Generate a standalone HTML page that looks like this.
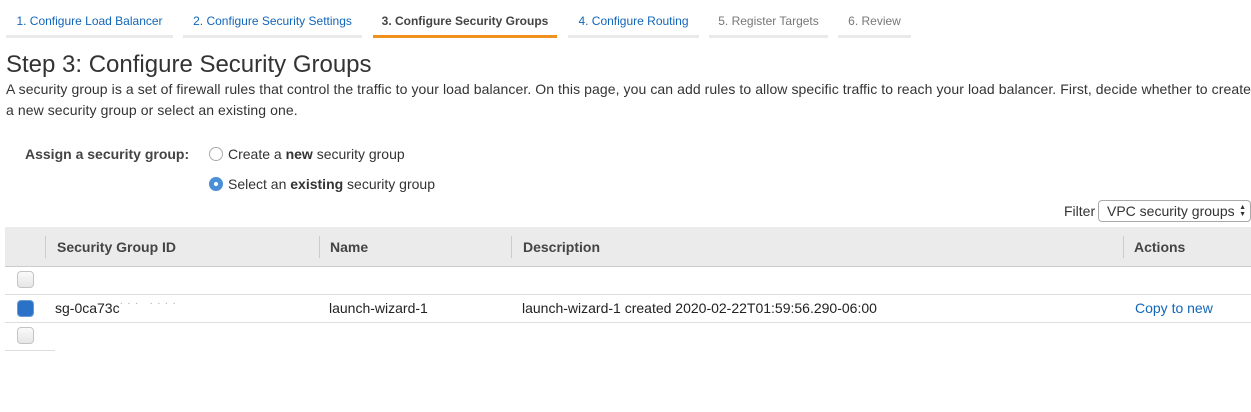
<!DOCTYPE html>
<html><head><style>
body{margin:0;width:1251px;height:412px;background:#fff;font-family:"Liberation Sans",Arial,sans-serif;color:#333;position:relative;overflow:hidden}
.a{position:absolute}
.tab{position:absolute;top:14px;font-size:12px;color:#1166bb;height:21px;border-bottom:3px solid #eaeaea;text-align:center;white-space:nowrap}
.cb{position:absolute;left:17px;width:15px;height:15px;border:1px solid #c4c4c4;border-radius:4px;background:linear-gradient(#fafafa,#e6e6e6)}
.th{position:absolute;top:239px;font-size:14px;font-weight:bold;color:#444}
.sep{position:absolute;top:236px;width:1px;height:22px;background:#ccc}
.td{position:absolute;top:300px;font-size:14px;color:#222}
.line{position:absolute;height:1px;background:#ddd}
</style></head><body>
<div class="tab" style="left:6px;width:167px">1. Configure Load Balancer</div>
<div class="tab" style="left:183px;width:179px">2. Configure Security Settings</div>
<div class="tab" style="left:373px;width:184px;border-color:#f0901e;color:#444;font-weight:bold">3. Configure Security Groups</div>
<div class="tab" style="left:568px;width:131px">4. Configure Routing</div>
<div class="tab" style="left:709px;width:119px;color:#777">5. Register Targets</div>
<div class="tab" style="left:838px;width:73px;color:#777">6. Review</div>
<div class="a" style="left:6px;top:51px;font-size:24px;color:#333">Step 3: Configure Security Groups</div>
<div class="a" style="left:6px;top:79px;font-size:14px;line-height:21px;width:1250px;color:#333;white-space:nowrap;letter-spacing:0.08px">A security group is a set of firewall rules that control the traffic to your load balancer. On this page, you can add rules to allow specific traffic to reach your load balancer. First, decide whether to create<br>a new security group or select an existing one.</div>
<div class="a" style="left:25px;top:146px;font-size:14px;font-weight:bold;color:#444">Assign a security group:</div>
<div class="a" style="left:209px;top:147px;width:12px;height:12px;border:1px solid #aaa;border-radius:50%;background:#fff"></div>
<div class="a" style="left:228px;top:146px;font-size:14px">Create a <b>new</b> security group</div>
<div class="a" style="left:209px;top:177px;width:14px;height:14px;border-radius:50%;background:#4a8fd8"><div class="a" style="left:5px;top:5px;width:4px;height:4px;border-radius:50%;background:#fff"></div></div>
<div class="a" style="left:228px;top:176px;font-size:14px">Select an <b>existing</b> security group</div>
<div class="a" style="left:1064px;top:203px;font-size:14px">Filter</div>
<div class="a" style="left:1098px;top:200px;height:22px;width:153px;border:1px solid #aaa;border-radius:4px;font-size:14px;line-height:20px;padding-left:8px;box-sizing:border-box">VPC security groups<span class="a" style="right:4px;top:3px;font-size:7px;line-height:7px">&#9650;<br>&#9660;</span></div>
<div class="a" style="left:5px;top:227px;width:1246px;height:40px;background:#ebebeb;border-bottom:1px solid #ccc;box-sizing:border-box"></div>
<div class="sep" style="left:45px"></div><div class="sep" style="left:319px"></div><div class="sep" style="left:511px"></div><div class="sep" style="left:1123px"></div>
<div class="th" style="left:57px">Security Group ID</div>
<div class="th" style="left:330px">Name</div>
<div class="th" style="left:523px">Description</div>
<div class="th" style="left:1134px">Actions</div>
<div class="cb" style="top:271px"></div>
<div class="line" style="left:5px;top:294px;width:1246px"></div>
<div class="cb" style="top:300px;background:#2a72c8;border-color:#6a9ad0"></div>
<div class="td" style="left:55px">sg-0ca73c<span style="color:#bbb;letter-spacing:3px">˙˙˙ ˙˙˙˙</span></div>
<div class="td" style="left:329px">launch-wizard-1</div>
<div class="td" style="left:522px">launch-wizard-1 created 2020-02-22T01:59:56.290-06:00</div>
<div class="td" style="left:1135px;color:#1166bb">Copy to new</div>
<div class="line" style="left:5px;top:322px;width:1246px"></div>
<div class="cb" style="top:327px"></div>
<div class="line" style="left:5px;top:350px;width:50px"></div>
</body></html>
